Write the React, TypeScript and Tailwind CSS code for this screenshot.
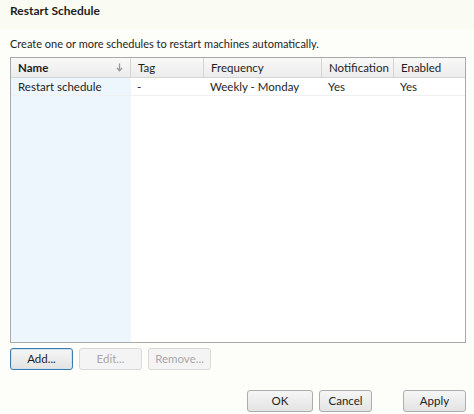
const columns = [
	{ label: "Name", width: "w-[120px]", sorted: true },
	{ label: "Tag", width: "w-[73px]" },
	{ label: "Frequency", width: "w-[118px]" },
	{ label: "Notification", width: "w-[72px]" },
	{ label: "Enabled", width: "flex-1" },
];

const rows = [["Restart schedule", "-", "Weekly - Monday", "Yes", "Yes"]];

function SortArrow() {
	return (
		<svg width="7" height="9" viewBox="0 0 7 9" className="text-[#9a9a9a]">
			<path d="M3.5 0.5V7.5M1 5L3.5 7.8L6 5" stroke="currentColor" strokeWidth="1.3" fill="none" />
		</svg>
	);
}

function DialogButton({
	label,
	disabled,
	primary,
	width = "w-[63px]",
}: {
	label: string;
	disabled?: boolean;
	primary?: boolean;
	width?: string;
}) {
	const base = `${width} h-[22px] rounded-[3px] border text-[11.5px] leading-none flex items-center justify-center`;
	if (disabled)
		return (
			<button className={`${base} border-[#d9d9d9] bg-[#f4f4f4] text-[#a8a8a8]`}>{label}</button>
		);
	return (
		<button
			className={`${base} ${
				primary ? "border-[#3d7bad] shadow-[inset_0_0_0_1px_#cfe3f3]" : "border-[#adadad]"
			} bg-gradient-to-b from-[#f6f6f6] to-[#e3e3e3] text-[#1e1e1e]`}
		>
			{label}
		</button>
	);
}

export default function App() {
	return (
		<main
			className="h-[414px] w-[474px] bg-[#fdfdf9] text-[#1e1e1e]"
			style={{ fontFamily: 'Lato, "Open Sans", sans-serif' }}
		>
			<div className="h-[30px] bg-[#fafcf4] px-[10px] pt-[2px] text-[12px] font-bold leading-[18px]">
				Restart Schedule
			</div>
			<p className="mt-[6px] px-[10px] text-[11px] leading-[16px]">
				Create one or more schedules to restart machines automatically.
			</p>
			<div className="mx-[10px] mt-[5px] flex h-[286px] w-[456px] flex-col border border-[#a9a9a9] bg-white">
				<div className="flex h-[20px] border-b border-[#d5d5d5] bg-gradient-to-b from-[#f9f9f9] to-[#ececec] text-[11.5px]">
					{columns.map((c, i) => (
						<div
							key={c.label}
							className={`${c.width} flex items-center justify-between px-[7px] ${
								i < columns.length - 1 ? "border-r border-[#d5d5d5]" : ""
							} ${c.sorted ? "font-bold" : ""}`}
						>
							<span>{c.label}</span>
							{c.sorted ? <SortArrow /> : null}
						</div>
					))}
				</div>
				<div className="relative flex-1">
					<div className="absolute inset-y-0 left-0 w-[120px] bg-[#edf5fd]" />
					{rows.map((r) => (
						<div key={r[0]} className="relative flex h-[18px] border-b border-[#f0f0f0] text-[11.5px]">
							{r.map((cell, i) => (
								<div
									key={i}
									className={`${columns[i].width} flex items-center px-[7px] ${i > 0 ? "pl-[6px]" : ""}`}
								>
									{cell}
								</div>
							))}
						</div>
					))}
				</div>
			</div>
			<div className="mt-[5px] flex gap-[6px] px-[10px]">
				<DialogButton label="Add..." primary />
				<DialogButton label="Edit..." disabled />
				<DialogButton label="Remove..." disabled />
			</div>
			<div className="mt-[20px] flex justify-end px-[8px]">
				<div className="flex gap-[6px]">
					<DialogButton label="OK" width="w-[66px]" />
					<DialogButton label="Cancel" width="w-[53px]" />
				</div>
				<div className="ml-[31px]">
					<DialogButton label="Apply" width="w-[63px]" />
				</div>
			</div>
		</main>
	);
}
